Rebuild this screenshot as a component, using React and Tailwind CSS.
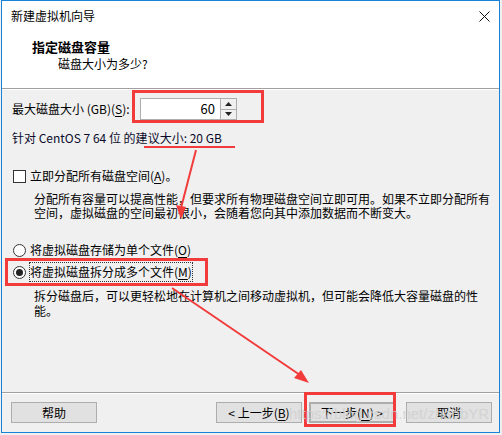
import React from 'react';

const Acc = ({ children }) => <span className="underline underline-offset-2">{children}</span>;

const Btn = ({ children, className = '' }) => (
  <div className={`h-[21px] w-[86px] flex items-center justify-center bg-[#e1e1e1] border border-[#adadad] text-[12px] text-black ${className}`}>
    {children}
  </div>
);

const App = () => {
  return (
    <div
      className="relative w-[502px] h-[435px] bg-[#f0f0f0] overflow-hidden text-black"
      style={{ fontFamily: '"Noto Sans CJK SC", "Noto Sans", sans-serif' }}
    >
      <div className="ml-[1px] w-[499px] h-[433px] border border-[#1883d7] bg-[#f0f0f0] flex flex-col">
        {/* Title bar */}
        <div className="h-[29px] bg-white flex items-center justify-between pl-[9px] pr-[9px]">
          <span className="text-[12px] leading-none">新建虚拟机向导</span>
          <svg width="11" height="11" viewBox="0 0 11 11" className="mt-[1px]">
            <path d="M0.5 0.5L10.5 10.5M10.5 0.5L0.5 10.5" stroke="#111" strokeWidth="1" />
          </svg>
        </div>

        {/* Header */}
        <div className="h-[59px] bg-white border-b border-[#a0a0a0] flex flex-col">
          <div className="mt-[9px] pl-[30px] text-[13px] font-bold leading-[16px]">指定磁盘容量</div>
          <div className="mt-[1px] pl-[56px] text-[12px] leading-[16px]">磁盘大小为多少?</div>
        </div>
        <div className="h-px bg-white" />

        {/* Body */}
        <div className="flex-1 flex flex-col text-[12px]">
          <div className="mt-[8px] h-[22px] flex items-center pl-[10px]">
            <span className="w-[128px]">最大磁盘大小 (GB)(<Acc>S</Acc>):</span>
            <div className="w-[97px] h-[22px] bg-white border border-[#adadad] flex items-stretch">
              <div className="flex-1 flex items-center justify-end pr-[5px] text-[13px]">60</div>
              <div className="w-[16px] flex flex-col border-l border-[#adadad] bg-[#f0f0f0]">
                <div className="flex-1 flex items-center justify-center border-b border-[#adadad]">
                  <svg width="7" height="4" viewBox="0 0 7 4"><path d="M0 4L3.5 0L7 4Z" fill="#222" /></svg>
                </div>
                <div className="flex-1 flex items-center justify-center">
                  <svg width="7" height="4" viewBox="0 0 7 4"><path d="M0 0L3.5 4L7 0Z" fill="#222" /></svg>
                </div>
              </div>
            </div>
          </div>

          <div className="mt-[10px] h-[16px] flex items-center pl-[10px] text-[#0a0a2a]">
            针对 CentOS 7 64 位 的建议大小: 20 GB
          </div>

          <div className="mt-[22px] h-[16px] flex items-center pl-[11px]">
            <div className="w-[13px] h-[13px] bg-white border border-[#333]" />
            <span className="ml-[4px]">立即分配所有磁盘空间(<Acc>A</Acc>)。</span>
          </div>
          <div className="mt-[8px] pl-[32px] pr-[8px] leading-[14px]">
            分配所有容量可以提高性能，但要求所有物理磁盘空间立即可用。如果不立即分配所有空间，虚拟磁盘的空间最初很小，会随着您向其中添加数据而不断变大。
          </div>

          <div className="mt-[22px] h-[16px] flex items-center pl-[11px]">
            <div className="w-[13px] h-[13px] rounded-full bg-white border border-[#333]" />
            <span className="ml-[4px]">将虚拟磁盘存储为单个文件(<Acc>O</Acc>)</span>
          </div>
          <div className="mt-[6px] h-[16px] flex items-center pl-[11px]">
            <div className="w-[13px] h-[13px] rounded-full bg-white border border-[#333] flex items-center justify-center">
              <div className="w-[7px] h-[7px] rounded-full bg-[#222]" />
            </div>
            <span className="ml-[4px] outline-1 outline-dotted outline-[#333]">将虚拟磁盘拆分成多个文件(<Acc>M</Acc>)</span>
          </div>
          <div className="mt-[8px] pl-[32px] pr-[8px] leading-[15px]">
            拆分磁盘后，可以更轻松地在计算机之间移动虚拟机，但可能会降低大容量磁盘的性能。
          </div>
        </div>

        {/* Footer */}
        <div className="h-[40px] flex flex-col">
          <div className="h-px bg-[#a0a0a0]" />
          <div className="h-px bg-white" />
          <div className="mt-[8px] flex items-center pl-[9px]">
            <Btn>帮助</Btn>
            <Btn className="ml-[119px]">&lt; 上一步(<Acc>B</Acc>)</Btn>
            <Btn className="ml-[7px] border-[#0078d7] border-2">下一步(<Acc>N</Acc>) &gt;</Btn>
            <Btn className="ml-[11px]">取消</Btn>
          </div>
        </div>
      </div>

      {/* Annotations */}
      <div className="absolute left-[132px] top-[90px] w-[132px] h-[33px] border-[3px] border-[#f23b3b]" />
      <div className="absolute left-[144px] top-[146px] w-[91px] h-[2px] bg-[#f23b3b]" />
      <div className="absolute left-[5px] top-[258px] w-[203px] h-[28px] border-[3px] border-[#f23b3b]" />
      <div className="absolute left-[304px] top-[392px] w-[92px] h-[35px] border-[3px] border-[#f23b3b]" />
      <svg className="absolute left-0 top-0 pointer-events-none" width="502" height="435">
        <line x1="196" y1="150" x2="181" y2="208" stroke="#f23b3b" strokeWidth="2" />
        <path d="M176 205L181 219L186 207Z" fill="#f23b3b" />
        <line x1="172" y1="288" x2="300" y2="375" stroke="#f23b3b" strokeWidth="2" />
        <path d="M294 378L309 383L301 370Z" fill="#f23b3b" />
      </svg>
      <div
        className="absolute left-[289px] top-[405px] text-[15px] leading-[18px] text-[#d0d0d0] opacity-80"
        style={{ fontFamily: '"Liberation Sans", Arial, sans-serif' }}
      >
        https://blog.csdn.net/zhaobYR
      </div>
    </div>
  );
};

export default App;
